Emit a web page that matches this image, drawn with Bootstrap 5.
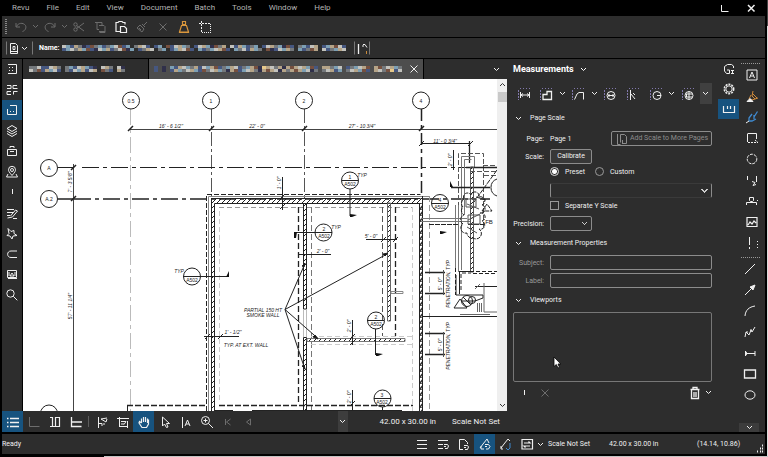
<!DOCTYPE html>
<html lang="en" data-bs-theme="dark">
<head>
<meta charset="utf-8">
<meta name="viewport" content="width=device-width, initial-scale=1">
<title>Revu</title>
<link href="https://cdn.jsdelivr.net/npm/bootstrap@5.3.0/dist/css/bootstrap.min.css" rel="stylesheet">
<style>
:root{--pane:#2d2d2d;--hot:#17537f;--edge:#8c8c8c}
body{font-family:Roboto,"Open Sans",sans-serif;font-size:7px;line-height:10px;color:#f0f0f0;
 background:linear-gradient(90deg,#000 104px,#c4c4c4 104px) bottom/100% 1px no-repeat,linear-gradient(#444 26px,#ddd 26px) right/1px 100% no-repeat,#000}
.app{min-height:100vh;padding:0 3px 3px 2px}
.pane{background:var(--pane)}
.menu{height:16px;font-size:8px;gap:17px;padding-left:10px}
.menu a{color:#b4b4b4;text-decoration:none}
.winbtns{gap:13px;padding-right:7px}
button{font:inherit;color:inherit;background:none;border:0;padding:0}
.tool{width:21px;height:21px;flex:none;display:flex;align-items:center;justify-content:center}
.tool.slim{width:8px}
.tool.rail{height:20px;width:20px}
.off{color:#6d6d6d}
.amber{color:#d9963c}
.hot{background:var(--hot)}
.ic{width:14px;height:14px;flex:none;fill:none;stroke:currentColor;stroke-width:1;display:block}
.ic.chev{width:7px;height:7px}
.row-tools{height:21px;margin-bottom:1px}
.row-name{height:20px;margin-bottom:1px}
.row-name b{color:#fff;margin:0 2px 0 6px}
.framebox{border:1px solid #777;border-top-color:transparent;border-bottom-color:transparent;height:14px}
.grip-v{width:2px;height:16px;margin:0 3px;background:repeating-linear-gradient(#888 0 1px,transparent 1px 2px)}
.grip-h{height:1px;width:20px;background:repeating-linear-gradient(90deg,#999 0 1px,transparent 1px 2px)}
.mosaic{display:block;height:6px;flex:none}
.siderail{width:20px;margin-right:1px}
.siderail-in{min-height:246px}
.work{min-width:0}
.tabs{height:20px}
.tab1{width:126px;border-right:1px solid #000;padding-left:6px}
.tab2{width:275px;background:#4d4d4d;border-right:1px solid #000;padding:0 2px 0 5px}
.sheet{background:#fff;min-height:0;overflow:hidden}
.sheet>svg{flex:1 1 0;min-width:0;height:332px;min-height:100%}
.vscroll{width:11px;background:#efefef;color:#333;border-right:1px solid var(--pane);padding:2px 0}
.thumb{width:9px;height:10px;background:#c9c9c9}
.foot{height:21px;font-size:8px}
.foot .vr{height:11px;margin:0 2px}
.zoombox{width:10px;background:#3d3d3d;height:21px;display:flex;align-items:center;justify-content:center}
.footend{width:257px;padding-right:6px}
.props{width:210px;padding:0 6px 0 5px}
.title{height:20px;font-size:9px;font-weight:700;color:#fff;gap:6px}
.title h1{font:inherit;margin:0}
.mtools{height:21px;margin:4px 0 1px}
.more{width:12px;height:21px;background:#404040;display:flex;align-items:center;justify-content:center}
.sect{height:26px;gap:8px;padding-left:2px;width:100%}
.sect.low{height:24px}
.line{height:15px;gap:6px}
.line.next{margin-top:3px}
.lab{width:31px;text-align:right;flex:none;white-space:nowrap}
.shift{margin-left:37px}
.dim{color:#999}
.ctl{height:15px;border:1px solid var(--edge);border-radius:2px;background:transparent;color:inherit;font-size:7px;line-height:9px;padding:0 4px;min-width:0}
select.ctl{appearance:none;background-image:linear-gradient(45deg,transparent 50%,#ccc 50% 66%,transparent 66%),linear-gradient(-45deg,transparent 50%,#ccc 50% 66%,transparent 66%);background-size:4px 4px;background-repeat:no-repeat;background-position:right 6px center,right 3px center}
select.faint{border-top-color:#3a3a3a;border-bottom-color:#3a3a3a}
.calib{width:42px}
button.calib{background:#383838}
.addbtn{width:101px;color:#8c8c8c;gap:1px}
input.tick{appearance:none;width:9px;height:9px;margin:0;border:1px solid #999;flex:none}
input.tick[type=radio]{border-radius:50%}
input.tick[type=radio]:checked{border-color:#ddd;background:radial-gradient(#fff 0 2px,transparent 3px)}
.views{height:70px;border:1px solid #777;border-radius:2px;position:relative}
.pointer{position:absolute;left:39px;top:43px;width:8px;height:13px}
.tabrail{width:21px}
.tabrail .tool{height:20px}
.toolrail{width:26px;padding:4px 0 0 2px}
.toolrail .tool.lower{width:18px}
.corner{width:20px;height:9px;background:#3c3c3c}
.status{height:20px;margin-top:2px}
.status .tool{height:20px}
.st-scale{width:61px}.st-size{width:88px}.st-pos{width:58px}
.ic.sizer{width:10px;height:10px}
</style>
</head>
<body>
<svg class="d-none" aria-hidden="true">
<symbol id="chev" viewBox="0 0 7 7"><path d="M1 2l2.500 2.500L6 2"/></symbol>
<symbol id="undo" viewBox="0 0 14 14"><path d="M2 3v4h4M2.500 6.500C4 3 9 2 11.500 5.500c1 2 0 5-3 6"/></symbol>
<symbol id="redo" viewBox="0 0 14 14"><path d="M12 3v4H8M11.500 6.500C10 3 5 2 2.500 5.500c-1 2 0 5 3 6"/></symbol>
<symbol id="cut" viewBox="0 0 14 14"><path d="M4.500 5.500L12 11M4.500 8.500L12 3"/><circle cx="3.500" cy="4.500" r="1.700"/><circle cx="3.500" cy="9.500" r="1.700"/></symbol>
<symbol id="copy" viewBox="0 0 14 14"><path d="M2 2.500h7V5M4 2.500v7h2M6 5.500h5l1 1v6H6.500M6 11.500h6"/></symbol>
<symbol id="paste" viewBox="0 0 14 14"><path d="M6 11.500H2v-9h2l1-1h3l1 1h2v2M6.500 12.500v-6h4l2 2v4z" stroke-width="1.200"/></symbol>
<symbol id="brush" viewBox="0 0 14 14"><path d="M12 2L8 6M5 5l4 4-2 3-5-4zM4 8l2 2M7 4l3 3"/></symbol>
<symbol id="x" viewBox="0 0 14 14"><path d="M3.500 3.500l7 7M10.500 3.500l-7 7"/></symbol>
<symbol id="stamp" viewBox="0 0 14 14"><path d="M5.500 1.500h3v3h-3zM4.500 5.500h5l2 6.500h-9z" stroke-width="1.200"/><path d="M2 12.500h10"/></symbol>
<symbol id="crop" viewBox="0 0 14 14"><path d="M3.500 1v12M1 3.500h12" stroke-dasharray="2 1"/><path d="M12.500 4v9M4 12.500h8" stroke-dasharray="1 1"/></symbol>
<symbol id="doc" viewBox="0 0 14 14"><path d="M3.500 12.500v-10h5l2 2v8zM6 5.500h2v3H6zM4 10.500h6"/></symbol>
<symbol id="pages" viewBox="0 0 14 14"><path d="M3.500 2v10" stroke-width="1.300"/><path d="M8 2.500h2l2 3M8 3v2"/><path d="M11.500 9v3" stroke="#c98a3b"/></symbol>
<symbol id="thumbs" viewBox="0 0 14 14"><path d="M3 2.500h8.500v9H3M4 5.500h1m2 0h1M4 8.500h1m2 0h1"/></symbol>
<symbol id="grid4" viewBox="0 0 14 14"><path d="M2 2.500h4v3H2M6 8.500H2v3h4M8 5.500h4.500M8 2.500v3M8.500 11.500v-3h4M2 5.500h4M8 2.500h4"/></symbol>
<symbol id="prop" viewBox="0 0 14 14"><path d="M5 2.500h6.500v9h-9V6M5 8.500h1m2 0h1"/></symbol>
<symbol id="layers" viewBox="0 0 14 14"><path d="M7 1.500l5 3-5 3-5-3zM2 7l5 3 5-3M2 9.500l5 3 5-3"/></symbol>
<symbol id="case" viewBox="0 0 14 14"><path d="M5 4V2.500h4V4M2.500 5.500h9v6h-9zM5 7.500h4"/></symbol>
<symbol id="pin" viewBox="0 0 14 14"><path d="M7 10.500C4 7 3.500 6 3.500 4.800a3.500 3.500 0 017 0C10.500 6 10 7 7 10.500zM3 9l-1.500 3h11L11 9"/><circle cx="7" cy="5" r="1.500"/></symbol>
<symbol id="bar" viewBox="0 0 14 14"><path d="M7.500 4v5"/></symbol>
<symbol id="sig" viewBox="0 0 14 14"><path d="M2 3.500h7M2 6.500h6M2 9.500h3M2.500 12l5-1 5-6-2-1-5 6M8 12.500h4"/></symbol>
<symbol id="star" viewBox="0 0 14 14"><path d="M3 2.500l3 3 3-1v3l3 2-4 .5-1 3-2-3-3-.5 2-2z"/></symbol>
<symbol id="clip" viewBox="0 0 14 14"><path d="M12 4H6C1.500 4 1.500 10.500 6 10.500h6"/></symbol>
<symbol id="img2" viewBox="0 0 14 14"><path d="M2.500 3.500h9v7h-9zM4 5v4M10 5v4M3 11.500h9M5 9l2-3 2 3z"/></symbol>
<symbol id="lens" viewBox="0 0 14 14"><circle cx="5.500" cy="5.500" r="3.700"/><path d="M8.300 8.300l4 4"/></symbol>
<symbol id="list" viewBox="0 0 14 14"><path d="M4 3.500h9M4 7.500h9M4 11.500h9M1 3.500h1.500M1 7.500h1.500M1 11.500h1.500" stroke-width="1.400"/></symbol>
<symbol id="ell" viewBox="0 0 14 14"><path d="M2.500 2v9.500h10"/></symbol>
<symbol id="cols" viewBox="0 0 14 14"><path d="M2 2.500h2.500v9H2M7.500 2.500h4v9h-4zM4 11.500h4" stroke-width="1.200"/></symbol>
<symbol id="rows" viewBox="0 0 14 14"><path d="M2.500 2v9.500h10M3 7h10" stroke-width="1.300"/></symbol>
<symbol id="sync" viewBox="0 0 14 14"><path d="M3.500 2v11M4 8.500h3V11M6 4l6-1M6 4l5 3 1-3M9 8v2"/></symbol>
<symbol id="fit" viewBox="0 0 14 14"><path d="M1 3.500h12M3.500 2v10M3 11.500h9M11.500 6v7M5 6.500h5l-2 3M5 9h3"/></symbol>
<symbol id="hand" viewBox="0 0 14 14"><path d="M4.500 8V3.500M6.500 7V2M8.500 7V2M10.500 8V3.500M4.500 8L2.500 6.500 2 8l3 4.500h4.500l2-3.500V4.500" stroke-width="1.200"/></symbol>
<symbol id="arrow" viewBox="0 0 14 14"><path d="M4.500 2v9l2-2 2 3.500L10 12 8.500 8.500h3z"/></symbol>
<symbol id="texta" viewBox="0 0 14 14"><path d="M3.500 2v11M6 11l2.500-6L11 11M7 9h3"/></symbol>
<symbol id="zoomin" viewBox="0 0 14 14"><circle cx="5.500" cy="5.500" r="4"/><path d="M3.500 5.500h4M5.500 3.500v4M8.500 8.500l4.500 4.500"/></symbol>
<symbol id="first" viewBox="0 0 14 14"><path d="M4.500 4v6M9.500 4l-4 3 4 3"/></symbol>
<symbol id="prev" viewBox="0 0 14 14"><path d="M8.500 4l-4 3 4 3z"/></symbol>
<symbol id="max" viewBox="0 0 14 14"><path d="M4.500 4v6.500h7"/></symbol>
<symbol id="close" viewBox="0 0 14 14"><path d="M4 4l6.500 6.500M10.500 4L4 10.500" stroke-width="1.500"/></symbol>
<!-- measuring tools share the violet ruler along the top and left -->
<symbol id="ruler" viewBox="0 0 14 14"><path d="M1.500 3v10" stroke="#8279ac" stroke-dasharray="2 1"/><path d="M3 1.500h10" stroke="#8279ac" stroke-dasharray="1 2"/></symbol>
<symbol id="mlen" viewBox="0 0 14 14"><use href="#ruler"/><path d="M3.500 5v6M12.500 5v6M4 8h8M6 6.500L4 8l2 1.500M10 6.500L12 8l-2 1.500"/></symbol>
<symbol id="marea" viewBox="0 0 14 14"><use href="#ruler"/><path d="M4 12.500h8.500v-8H8v3H4z" stroke-width="1.300"/></symbol>
<symbol id="mpoly" viewBox="0 0 14 14"><use href="#ruler"/><path d="M3.500 12.500L6 7l2-1.500h4.500v7"/></symbol>
<symbol id="mdia" viewBox="0 0 14 14"><use href="#ruler"/><circle cx="8" cy="8.500" r="4"/><path d="M5 8.500h6M6 7v3M10 7v3"/></symbol>
<symbol id="mang" viewBox="0 0 14 14"><use href="#ruler"/><path d="M4.500 3v10M5 7l4 5M7 6l2 2"/></symbol>
<symbol id="mrad" viewBox="0 0 14 14"><use href="#ruler"/><circle cx="8" cy="8.500" r="4"/><path d="M8 8.500h4"/></symbol>
<symbol id="mvol" viewBox="0 0 14 14"><use href="#ruler"/><circle cx="8" cy="8.500" r="4"/><path d="M8 4.500v8M5 7h6M5 10h6M5.500 7v3"/></symbol>
<symbol id="hist" viewBox="0 0 14 14"><path d="M2.500 9V4.500l3-2h4l2 1.500v2M2.500 9l2 2.500h3V8H5M9 8.500h3M9 11.500h3M10.500 9v2"/></symbol>
<symbol id="gear" viewBox="0 0 14 14"><circle cx="7" cy="7" r="4.700" stroke-width="1.500" stroke-dasharray="2 1"/><circle cx="7" cy="7" r="3.200"/></symbol>
<symbol id="meas" viewBox="0 0 14 14"><path d="M1.500 4v6.500h11V4M5.500 4v3M8.500 4v3" stroke-width="1.200"/></symbol>
<symbol id="abox" viewBox="0 0 14 14"><path d="M2 2h10v10H2zM4.500 10L7 4l2.500 6M5.500 8h3"/></symbol>
<symbol id="hilite" viewBox="0 0 14 14"><path d="M8 2l-1 5 3 3 3-1M7 4l5 5M6 6l-2 4 3 1 3-1" stroke="#d08a3a"/><path d="M2 12.500h6l-3-3z" fill="currentColor"/></symbol>
<symbol id="pen" viewBox="0 0 14 14"><path d="M12.500 1.500L9 7M7 4L4 8v3h3l4-2M9 5v4" stroke="#3f8ad0" stroke-width="1.300"/><path d="M1 13l3-2"/></symbol>
<symbol id="rectd" viewBox="0 0 14 14"><path d="M2.500 2.500h9V8M2.500 3v8" /><path d="M3 11.500h10M10 9l3 2.500" stroke-dasharray="2 1"/></symbol>
<symbol id="elld" viewBox="0 0 14 14"><circle cx="7" cy="7" r="4.800" stroke-dasharray="3 1"/></symbol>
<symbol id="callo" viewBox="0 0 14 14"><path d="M2.500 3v4M11.500 3v6M7 8.500l3 1-2 3 3-1"/></symbol>
<symbol id="person" viewBox="0 0 14 14"><path d="M4.500 3.500h4v3l-1 1h-2l-1-1zM1.500 11V8.500h10V11M12 6.500h1"/></symbol>
<symbol id="pic" viewBox="0 0 14 14"><path d="M2 2.500h10v9H2zM3 10l2-3 2 2 2-3 2 2" stroke-width="1.200"/></symbol>
<symbol id="dots" viewBox="0 0 14 14"><path d="M4.500 1v8M4.500 11v2" /><path d="M12.500 5v8" stroke-dasharray="1 2"/></symbol>
<symbol id="ln" viewBox="0 0 14 14"><path d="M2 12L12 2"/></symbol>
<symbol id="larr" viewBox="0 0 14 14"><path d="M2 12l8-8"/><path d="M12 2L7 4l3 3z" fill="currentColor"/></symbol>
<symbol id="arc" viewBox="0 0 14 14"><path d="M2 12C2.500 6 6 3 12 2"/></symbol>
<symbol id="pl" viewBox="0 0 14 14"><path d="M2 12l1-5 3 3 2-5 1 2 3-5M3 7h2M7 5h2"/></symbol>
<symbol id="dimn" viewBox="0 0 14 14"><path d="M2 7.500h10M2.500 5v5M12 5v5M4 6L2 7.500 4 9"/></symbol>
<symbol id="rct" viewBox="0 0 14 14"><path d="M1.500 3h11v8h-11z" stroke-width="1.300"/></symbol>
<symbol id="elp" viewBox="0 0 14 14"><ellipse cx="7" cy="7" rx="5" ry="4.200"/></symbol>
<symbol id="trash" viewBox="0 0 14 14"><path d="M2.500 3.500h9M5 3V1.500h4V3M3.500 4v8.500h7V4M6 6v5M8 6v5" stroke-width="1.300"/></symbol>
<symbol id="ham" viewBox="0 0 14 14"><path d="M2 3.500h10M2 7.500h10M2 11.500h10"/></symbol>
<symbol id="hamc" viewBox="0 0 14 14"><path d="M2 3.500h10M2 7.500h5M2 11.500h5"/><path d="M8 7.500h3.500l1 1.500-1 2.500H9M8 9.500h2"/></symbol>
<symbol id="docc" viewBox="0 0 14 14"><path d="M6 12.500H2.500v-10h5l3 3V7"/><path d="M7 8.500h3.500l1 1.500-1 2.500H8M7 10.500h2"/></symbol>
<symbol id="addpg" viewBox="0 0 14 14"><path d="M2.500 2v10.500h3M5.500 10.500v-8h4l2 2v7h-4M7.500 8v4"/></symbol>
<symbol id="snap" viewBox="0 0 14 14"><path d="M2 11l3-4 4-5 2 4M3 9v3h3"/><path d="M7 7.500h3.500l1.500 2-1.500 2.500H8M7 9.500h2"/></symbol>
<symbol id="snapb" viewBox="0 0 14 14"><path d="M2 11l3-4 4-5 2 2M2 9v3h2"/><path d="M11 6v5l-2 2-2-2" stroke="#3f8ad0"/></symbol>
<symbol id="swap" viewBox="0 0 14 14"><path d="M2 2.500h10.500v9.500H2zM4 6h6L8.500 4.500M10 9H4l1.500 1.500" stroke-width="1.200"/></symbol>
</svg>

<div class="app d-flex flex-column">
<header>
 <div class="d-flex align-items-center justify-content-between">
  <nav class="menu d-flex align-items-center" aria-label="Main">
   <a href="#">Revu</a><a href="#">File</a><a href="#">Edit</a><a href="#">View</a><a href="#">Document</a><a href="#">Batch</a><a href="#">Tools</a><a href="#">Window</a><a href="#">Help</a>
  </nav>
  <div class="winbtns d-flex">
   <button aria-label="Maximize"><svg class="ic"><use href="#max"/></svg></button>
   <button aria-label="Close"><svg class="ic"><use href="#close"/></svg></button>
  </div>
 </div>
 <div class="pane row-tools d-flex align-items-center" role="toolbar" aria-label="Edit">
  <span class="grip-v"></span>
  <button class="tool off" aria-label="Undo"><svg class="ic"><use href="#undo"/></svg></button>
  <button class="tool slim off" aria-label="Undo list"><svg class="ic chev"><use href="#chev"/></svg></button>
  <button class="tool off" aria-label="Redo"><svg class="ic"><use href="#redo"/></svg></button>
  <button class="tool slim off" aria-label="Redo list"><svg class="ic chev"><use href="#chev"/></svg></button>
  <button class="tool off" aria-label="Cut"><svg class="ic"><use href="#cut"/></svg></button>
  <button class="tool off" aria-label="Copy"><svg class="ic"><use href="#copy"/></svg></button>
  <button class="tool" aria-label="Paste"><svg class="ic"><use href="#paste"/></svg></button>
  <button class="tool off" aria-label="Format painter"><svg class="ic"><use href="#brush"/></svg></button>
  <button class="tool off" aria-label="Delete"><svg class="ic"><use href="#x"/></svg></button>
  <button class="tool amber" aria-label="Stamp"><svg class="ic"><use href="#stamp"/></svg></button>
  <button class="tool" aria-label="Crop"><svg class="ic"><use href="#crop"/></svg></button>
 </div>
 <div class="pane row-name d-flex align-items-center">
  <button class="framebox d-flex align-items-center ms-1 pe-1" aria-label="Profile"><svg class="ic"><use href="#doc"/></svg><svg class="ic chev"><use href="#chev"/></svg></button>
  <b>Name:</b>
  <svg class="mosaic" width="288" viewBox="0 0 288 6" data-cells="cfbadgbedfbdfcebf.dacb.bf.ebcafd.bcafgeda.cbafbdf.bcadfgeb.dfbca.bfaecb" data-cells2="bfcdafebgcfabdcegf.bdac.df.bfaceb.fbdfcaeb.fdcbafd.egbcfad.fbdea.cbdfac"></svg>
  <button class="framebox ms-1" aria-label="Pages"><svg class="ic"><use href="#pages"/></svg></button>
 </div>
</header>

<main class="d-flex flex-fill">
 <div class="pane siderail">
  <div class="siderail-in d-flex flex-column justify-content-between">
   <button class="tool rail" aria-label="Thumbnails"><svg class="ic"><use href="#thumbs"/></svg></button>
   <button class="tool rail" aria-label="Bookmarks"><svg class="ic"><use href="#grid4"/></svg></button>
   <button class="tool rail hot" aria-label="Properties"><svg class="ic"><use href="#prop"/></svg></button>
   <button class="tool rail" aria-label="Layers"><svg class="ic"><use href="#layers"/></svg></button>
   <button class="tool rail" aria-label="Tool chest"><svg class="ic"><use href="#case"/></svg></button>
   <button class="tool rail" aria-label="Places"><svg class="ic"><use href="#pin"/></svg></button>
   <button class="tool rail" aria-label="Spaces"><svg class="ic"><use href="#bar"/></svg></button>
   <button class="tool rail" aria-label="Signatures"><svg class="ic"><use href="#sig"/></svg></button>
   <button class="tool rail" aria-label="Flags"><svg class="ic"><use href="#star"/></svg></button>
   <button class="tool rail" aria-label="Links"><svg class="ic"><use href="#clip"/></svg></button>
   <button class="tool rail" aria-label="Sets"><svg class="ic"><use href="#img2"/></svg></button>
   <button class="tool rail" aria-label="Search"><svg class="ic"><use href="#lens"/></svg></button>
  </div>
 </div>

 <section class="work d-flex flex-column flex-fill" aria-label="Document">
  <div class="pane tabs d-flex">
   <div class="tab1 d-flex align-items-center"><svg class="mosaic" width="98" viewBox="0 0 98 6" data-cells="ddcbbcad.dfbcafbg.cad.cg.dae" data-cells2="cdebafcb.dbcfabca.edb.ad.cbd"></svg></div>
   <div class="tab2 d-flex align-items-center justify-content-between"><svg class="mosaic" width="248" viewBox="0 0 248 6" data-cells="b.g.fbacfdabcfaebdfacbdfaeghacdagaeacafeb.aadfc.bdfcae.aedcafd" data-cells2="b.g.bafdcafbedcafdgaebfcadgaeacgadaeafcgd.dcabf.dcafeb.acdehbc"></svg>
    <button aria-label="Close tab"><svg class="ic"><use href="#x"/></svg></button></div>
   <button class="ms-auto me-2" aria-label="All tabs"><svg class="ic chev"><use href="#chev"/></svg></button>
  </div>
  <div class="sheet d-flex flex-fill">
   <svg viewBox="23 79 474 332" preserveAspectRatio="xMinYMin slice" fill="none" stroke="#222" stroke-width="1" font-family="Liberation Sans, sans-serif" font-size="5" role="img" aria-label="Floor plan">
    <defs><pattern id="hat" width="5" height="5" patternUnits="userSpaceOnUse"><path d="M0 5L5 0" stroke="#222"/></pattern>
    <pattern id="hat2" width="4" height="6" patternUnits="userSpaceOnUse"><path d="M0 5L4 0M0 6h4" stroke="#333" stroke-width="1.500"/></pattern></defs>
    <!-- grid lines -->
    <path d="M130.500 109v302" stroke="#bbb" stroke-dasharray="16 4 4 4"/>
    <path d="M211.500 109v87M304.500 109v90" stroke="#555" stroke-dasharray="14 3 3 3"/>
    <path d="M421.500 109v87" stroke-width="1.500" stroke-dasharray="12 4 4 4"/>
    <path d="M58 167.500h15M82 167.500h385" stroke-dasharray="17 4 4 4"/>
    <path d="M58 199h16M74 199h416" stroke-width="1.500" stroke-dasharray="17 4 4 4"/>
    <path d="M73.500 164v247M130 129.500h367" stroke="#444"/>
    <path d="M128 131l5-5M209 131l5-5M302 131l5-5M419 131l5-5M71 170l5-5M71 201l5-5" stroke-width="1.500"/>
    <g><circle cx="131" cy="100.500" r="8.500"/><circle cx="211" cy="100.500" r="8.500"/><circle cx="304" cy="100.500" r="8.500"/><circle cx="421" cy="100.500" r="8.500"/><circle cx="49" cy="168" r="8.500"/><circle cx="49" cy="199" r="8.500"/><circle cx="49" cy="413.500" r="8.500"/></g>
    <!-- outer walls -->
    <path d="M206.500 411V194.500h214" stroke-dasharray="5 2"/>
    <path d="M208.500 411V196.500h221" stroke="#888"/>
    <path d="M211 198h212v5H211z" fill="url(#hat)" stroke="none"/><path d="M211 203h4v208h-4z" fill="url(#hat)" stroke="none"/>
    <path d="M211.500 411V198.500h209M214.500 411V203.500h206"/>
    <path d="M419 203h4v208h-4z" fill="url(#hat2)" stroke="none"/><path d="M419.500 203v208M422.500 196v215"/>
    <path d="M219.500 400V207.500" stroke="#ccc" stroke-dasharray="5 3"/><path d="M219 207.500h193" stroke="#999" stroke-dasharray="5 3"/>
    <path d="M298.500 207v198" stroke-width="1.300" stroke-dasharray="6 3"/><path d="M311.500 207v204" stroke="#777" stroke-dasharray="6 3"/>
    <path d="M303.500 203v106h3V203M303.500 411v-73.500h3V411" fill="url(#hat)"/><path d="M303.500 309v28M306.500 309v28" stroke="#bbb"/>
    <path d="M127 405.500h80M219 405.500h194" stroke-dasharray="6 2" stroke-width="1.300"/><path d="M127.500 406v5"/>
    <path d="M387.500 203h3v118h-3z" fill="url(#hat)" stroke="#666"/>
    <path d="M382.500 207v129" stroke="#555" stroke-dasharray="6 3"/><path d="M395.500 207v129" stroke-width="1.300" stroke-dasharray="6 3"/>
    <path d="M412.500 207v204M311 336.500h101M311 344.500h101" stroke="#ccc" stroke-dasharray="5 3"/>
    <path d="M307 338.500h98v3h-98z" fill="url(#hat)" stroke="#777"/><path d="M391 291.500h12v2h-12z" stroke="#888"/>
    <path d="M429.500 196v215" stroke="#999" stroke-dasharray="6 3"/><path d="M215 410.500h18M252 410.500h150"/>
    <!-- dimension strings -->
    <path d="M421 143.500h49M282.500 177v33M204 336.500h35M366 239.500h31M298 254.500h33M352.500 320v25M352.500 390v20M453.500 150v20"/>
    <path d="M419 146l5-5M468 146l5-5M280 199l5-5M280 209l5-5M205 339l5-5M218 339l5-5M381 242l5-5M393 242l5-5M350 339l5-5M350 345l5-5M350 406l5-5"/>
    <path d="M469.500 141v22" stroke-width="1.300"/>
    <!-- section markers -->
    <path d="M350 189v27M295 232.500h37M183 276.500h46M375.500 329v26M382.500 407v4M367 320.500h17M374 398.500h17M431.500 203.500h17M341.500 180.500h17"/>
    <g><circle cx="350" cy="180.500" r="8.500"/><circle cx="323.500" cy="232.500" r="8.500"/><circle cx="192" cy="276.500" r="8.500"/><circle cx="440" cy="203" r="8.500"/><circle cx="376" cy="320.500" r="8.500"/><circle cx="382.500" cy="398.500" r="8.500"/><path d="M497 179a9 9 0 000 17"/></g>
    <g fill="#111" stroke="none"><path d="M350 214l7 1-5 2h-2zM294 232h3l-1 6h-2zM226 277l3-6v6zM376 353l7 1-5 2h-2zM440 231l7 1-5 2h-2zM450 181l3 6h-3z"/></g>
    <path d="M285 309.500l20-46M285 309.500l103-56M285 309.500l33 29M285 309.500l20 60"/>
    <g fill="#111"><path d="M305 263l-3 3 2 1zM388 253l-5 1 2 2zM318 339l-5-2 2-2zM305 369l-3-3 2-1z"/></g>
    <!-- entrance bay -->
    <path d="M458.500 270V153.500h25v75M483 165.500h14M470 171.500h27M484 175.500h13" stroke="#555" stroke-dasharray="5 2"/>
    <path d="M461.500 270V156.500h13v11M464.500 215V159.500h7M421 218.500h46M421 221.500h49M455.500 205v67M458.500 205v67" stroke="#777"/>
    <path d="M466 167.500h31M451 187.500h39" stroke-width="1.300"/>
    <path d="M470.500 167h3v105h-3z" fill="url(#hat)" stroke="#555"/>
    <path d="M497 170l-23 32M486 200l-10-3M429 224.500h30M468 224.500h16" stroke-dasharray="5 1"/>
    <path d="M464 199a4 4 0 017-4 4 4 0 018 2 4 4 0 013 8 4 4 0 01-2 8 4 4 0 01 2 8 4 4 0 01-3 8 5 5 0 01-6 9 5 5 0 01-6-5 5 5 0 01-4-9 5 5 0 01 1-9 5 5 0 01-1-8 5 5 0 01 1-8zM482 211l5-7 5 7z" stroke-dasharray="4 1"/>
    <path d="M466 199h10v8h-10zM468 215h12v9h-12zM467 227l10 6M467 204l12 5M468 220l12-6" stroke="#555"/>
    <path d="M470 271.500h27M473 273.500h24M455.500 268v27M461 290v-17h10" stroke-dasharray="4 2"/>
    <path d="M456 275v20h27v3M459.500 272v22M459 271.500h12M423 316.500h74M475 286.500h22"/>
    <path d="M475 289l5-5M484 283v29h13M477.500 312v-9M479.500 312v-9M481.500 312v-9M460 314.500h30" stroke="#666"/>
    <circle cx="467" cy="301" r="5.500"/><circle cx="472" cy="300" r="3.500"/><path d="M454 308l6-9 7 9zM461 301h14l8-3M463 297l8 8"/>
    <path d="M425 272.500h20M425 293.500h20M425 333.500h20M425 354.500h20" stroke-width="1.300"/><path d="M443.500 270v25M443.500 332v25" stroke="#555"/>
    <!-- lettering -->
    <g fill="#222" stroke="none" text-anchor="middle">
     <text x="131" y="102.500">0.5</text><text x="211" y="102.500">1</text><text x="304" y="102.500">2</text><text x="421" y="102.500">4</text><text x="49" y="170">A</text><text x="49" y="201">A.2</text>
     <g font-style="italic"><text x="171" y="128">16' - 6 1/2"</text><text x="257" y="128">22' - 0"</text><text x="362" y="128">27' - 10 3/4"</text><text x="445" y="142.500">11' - 0 3/4"</text><text x="371" y="238">5' - 0"</text><text x="323" y="253">2' - 0"</text><text x="233" y="334">1' - 1/2"</text>
     <text x="263" y="311.500">PARTIAL 150 HT</text><text x="263" y="316.500">SMOKE WALL</text><text x="246" y="346.500">TYP. AT EXT. WALL</text>
     <text x="362" y="177">TYP</text><text x="336" y="229">TYP</text><text x="179" y="273">TYP</text>
     <text transform="translate(72 182) rotate(-90)">7' - 3 5/8"</text><text transform="translate(72 306) rotate(-90)">57' - 11 1/4"</text><text transform="translate(281 183) rotate(-90)">1' - 0"</text><text transform="translate(452 160) rotate(-90)">2' - 0"</text><text transform="translate(351 326) rotate(-90)">2' - 0"</text><text transform="translate(351 397) rotate(-90)">2' - 0"</text><text transform="translate(442 284) rotate(-90)">5' - 0"</text><text transform="translate(442 345) rotate(-90)">5' - 0"</text>
     <text transform="translate(450 284) rotate(-90)">PENETRATION, TYP</text><text transform="translate(450 346) rotate(-90)">PENETRATION, TYP</text></g>
     <text x="350" y="179">1</text><text x="350" y="186">A502</text><text x="324" y="231">2</text><text x="324" y="238">A502</text><text x="192" y="282">A502</text><text x="440" y="202">4</text><text x="440" y="209">A502</text><text x="376" y="319">2</text><text x="376" y="326">A502</text><text x="382" y="397">3</text><text x="382" y="404">A502</text><text x="489" y="224" font-size="6">FB</text>
    </g>
   </svg>
   <div class="vscroll d-flex flex-column align-items-center justify-content-between">
    <div><svg class="ic chev mx-auto" viewBox="0 0 7 7"><path d="M1 5l2.500-2.500L6 5"/></svg><div class="thumb mt-1"></div></div>
    <svg class="ic chev"><use href="#chev"/></svg>
   </div>
  </div>
 </section>

 <section class="pane d-flex" aria-label="Measurements panel">
  <div class="props">
   <div class="title d-flex align-items-center"><h1>Measurements</h1><svg class="ic chev"><use href="#chev"/></svg></div>
   <div class="mtools d-flex align-items-center justify-content-between" role="toolbar" aria-label="Measure">
    <button class="tool" aria-label="Length"><svg class="ic"><use href="#mlen"/></svg></button>
    <button class="tool" aria-label="Area"><svg class="ic"><use href="#marea"/></svg></button>
    <button class="tool slim" aria-label="Area options"><svg class="ic chev"><use href="#chev"/></svg></button>
    <button class="tool" aria-label="Perimeter"><svg class="ic"><use href="#mpoly"/></svg></button>
    <button class="tool slim" aria-label="Perimeter options"><svg class="ic chev"><use href="#chev"/></svg></button>
    <button class="tool" aria-label="Diameter"><svg class="ic"><use href="#mdia"/></svg></button>
    <button class="tool" aria-label="Angle"><svg class="ic"><use href="#mang"/></svg></button>
    <button class="tool" aria-label="Radius"><svg class="ic"><use href="#mrad"/></svg></button>
    <button class="tool slim" aria-label="Radius options"><svg class="ic chev"><use href="#chev"/></svg></button>
    <button class="tool" aria-label="Volume"><svg class="ic"><use href="#mvol"/></svg></button>
    <button class="more" aria-label="More tools"><svg class="ic chev"><use href="#chev"/></svg></button>
   </div>
   <button class="sect d-flex align-items-center"><svg class="ic chev"><use href="#chev"/></svg>Page Scale</button>
   <div class="line d-flex align-items-center"><span class="lab">Page:</span><span>Page 1</span>
    <button class="ctl addbtn ms-auto d-flex align-items-center justify-content-center text-nowrap"><svg class="ic"><use href="#addpg"/></svg>Add Scale to More Pages</button></div>
   <div class="line next d-flex align-items-center"><span class="lab">Scale:</span><button class="ctl calib">Calibrate</button></div>
   <div class="line shift d-flex align-items-center mb-1">
    <input class="tick" type="radio" name="sc" id="preset" checked><label for="preset">Preset</label>
    <input class="tick ms-1" type="radio" name="sc" id="custom"><label for="custom">Custom</label></div>
   <div class="line shift d-flex"><select class="ctl faint w-100" aria-label="Preset scale"><option></option></select></div>
   <div class="line shift d-flex align-items-center"><input class="tick" type="checkbox" id="ysc"><label for="ysc">Separate Y Scale</label></div>
   <div class="line next d-flex align-items-center"><label class="lab" for="prec">Precision:</label><select class="ctl calib" id="prec"><option></option></select></div>
   <button class="sect low d-flex align-items-center"><svg class="ic chev"><use href="#chev"/></svg>Measurement Properties</button>
   <div class="line d-flex align-items-center"><label class="lab dim" for="subj">Subject:</label><input class="ctl flex-fill" id="subj" type="text"></div>
   <div class="line next d-flex align-items-center"><label class="lab dim" for="labl">Label:</label><input class="ctl flex-fill" id="labl" type="text"></div>
   <button class="sect low d-flex align-items-center"><svg class="ic chev"><use href="#chev"/></svg>Viewports</button>
   <div class="views"><svg class="pointer" viewBox="0 0 8 13"><path d="M1 1v9.500l2.300-2L5 12l1.500-.7L5 8h2.800z" fill="#fff" stroke="#000" stroke-width=".8"/></svg></div>
   <div class="d-flex align-items-center">
    <button class="tool" aria-label="Add viewport"><svg class="ic"><use href="#bar"/></svg></button>
    <button class="tool off" aria-label="Remove viewport"><svg class="ic"><use href="#x"/></svg></button>
    <button class="tool ms-auto" aria-label="Delete"><svg class="ic"><use href="#trash"/></svg></button>
    <svg class="ic chev"><use href="#chev"/></svg>
   </div>
  </div>
  <div class="tabrail">
   <button class="tool" aria-label="History"><svg class="ic"><use href="#hist"/></svg></button>
   <button class="tool" aria-label="Settings"><svg class="ic"><use href="#gear"/></svg></button>
   <button class="tool hot" aria-label="Measurements"><svg class="ic"><use href="#meas"/></svg></button>
  </div>
  <div class="toolrail d-flex flex-column">
   <div class="grip-h"></div>
   <button class="tool" aria-label="Text box"><svg class="ic"><use href="#abox"/></svg></button>
   <button class="tool" aria-label="Highlight"><svg class="ic"><use href="#hilite"/></svg></button>
   <button class="tool" aria-label="Pen"><svg class="ic"><use href="#pen"/></svg></button>
   <button class="tool" aria-label="Cloud"><svg class="ic"><use href="#rectd"/></svg></button>
   <button class="tool" aria-label="Lasso"><svg class="ic"><use href="#elld"/></svg></button>
   <button class="tool" aria-label="Callout"><svg class="ic"><use href="#callo"/></svg></button>
   <button class="tool" aria-label="Stamp"><svg class="ic"><use href="#person"/></svg></button>
   <button class="tool" aria-label="Image"><svg class="ic"><use href="#pic"/></svg></button>
   <button class="tool" aria-label="Snapshot"><svg class="ic"><use href="#dots"/></svg></button>
   <div class="grip-h mt-1"></div>
   <button class="tool lower" aria-label="Line"><svg class="ic"><use href="#ln"/></svg></button>
   <button class="tool lower" aria-label="Arrow"><svg class="ic"><use href="#larr"/></svg></button>
   <button class="tool lower" aria-label="Arc"><svg class="ic"><use href="#arc"/></svg></button>
   <button class="tool lower" aria-label="Polyline"><svg class="ic"><use href="#pl"/></svg></button>
   <button class="tool lower" aria-label="Dimension"><svg class="ic"><use href="#dimn"/></svg></button>
   <button class="tool lower" aria-label="Rectangle"><svg class="ic"><use href="#rct"/></svg></button>
   <button class="tool lower" aria-label="Ellipse"><svg class="ic"><use href="#elp"/></svg></button>
  </div>
 </section>
</main>

<div class="foot d-flex pane">
 <button class="tool hot" aria-label="Markups list"><svg class="ic"><use href="#list"/></svg></button>
 <button class="tool off" aria-label="Unsplit"><svg class="ic"><use href="#ell"/></svg></button>
 <button class="tool" aria-label="Split vertical"><svg class="ic"><use href="#cols"/></svg></button>
 <button class="tool" aria-label="Split horizontal"><svg class="ic"><use href="#rows"/></svg></button>
 <div class="vr align-self-center"></div>
 <button class="tool" aria-label="Synchronize"><svg class="ic"><use href="#sync"/></svg></button>
 <button class="tool" aria-label="Fit"><svg class="ic"><use href="#fit"/></svg></button>
 <button class="tool hot" aria-label="Pan"><svg class="ic"><use href="#hand"/></svg></button>
 <button class="tool" aria-label="Select"><svg class="ic"><use href="#arrow"/></svg></button>
 <button class="tool" aria-label="Select text"><svg class="ic"><use href="#texta"/></svg></button>
 <button class="tool" aria-label="Zoom"><svg class="ic"><use href="#zoomin"/></svg></button>
 <button class="tool off" aria-label="First page"><svg class="ic"><use href="#first"/></svg></button>
 <button class="tool off" aria-label="Previous page"><svg class="ic"><use href="#prev"/></svg></button>
 <div class="d-flex align-items-center justify-content-end flex-fill pe-2 text-nowrap">
  <button class="zoombox me-4" aria-label="Page list"><svg class="ic chev"><use href="#chev"/></svg></button>
  <span class="ps-2 pe-3">42.00 x 30.00 in</span><span>Scale Not Set</span>
 </div>
 <div class="footend d-flex justify-content-end align-items-end"><button class="corner d-flex align-items-center justify-content-center" aria-label="More markup tools"><svg class="ic chev"><use href="#chev"/></svg></button></div>
</div>
<footer class="pane status d-flex align-items-center text-nowrap">
 <span>Ready</span>
 <button class="tool ms-auto" aria-label="Menu"><svg class="ic"><use href="#ham"/></svg></button>
 <button class="tool" aria-label="Sync list"><svg class="ic"><use href="#hamc"/></svg></button>
 <button class="tool" aria-label="Sync document"><svg class="ic"><use href="#docc"/></svg></button>
 <button class="tool hot" aria-label="Snap to content"><svg class="ic"><use href="#snap"/></svg></button>
 <button class="tool" aria-label="Snap to markup"><svg class="ic"><use href="#snapb"/></svg></button>
 <button class="tool" aria-label="Reuse"><svg class="ic"><use href="#swap"/></svg></button>
 <svg class="ic chev"><use href="#chev"/></svg>
 <span class="st-scale ms-1">Scale Not Set</span><span class="st-size">42.00 x 30.00 in</span><span class="st-pos">(14.14, 10.86)</span>
 <svg class="ic sizer align-self-end" viewBox="0 0 10 10"><path d="M7 1.500h1M5 4.500h1M7 4.500h1M2 7.500h1M5 7.500h1M7 7.500h1" stroke-width="2"/></svg>
</footer>
</div>
<script src="https://cdn.jsdelivr.net/npm/bootstrap@5.3.0/dist/js/bootstrap.bundle.min.js"></script>
<script>
// Redacted file names: each letter is one 4x3 colour block.
const tones={a:'#b5a488',b:'#465780',c:'#c2c2bd',d:'#74787c',e:'#76503f',f:'#7d9fb3',g:'#30304a',h:'#e6c88a'};
document.querySelectorAll('.mosaic').forEach(s=>{
  [s.dataset.cells,s.dataset.cells2].forEach((t,r)=>[...t].forEach((k,i)=>{
    if(!tones[k])return;
    const b=document.createElementNS('http://www.w3.org/2000/svg','rect');
    b.setAttribute('x',i*4);b.setAttribute('y',r*3);b.setAttribute('width',4);b.setAttribute('height',3);b.setAttribute('fill',tones[k]);
    s.append(b);
  }));
});
</script>
</body>
</html>
